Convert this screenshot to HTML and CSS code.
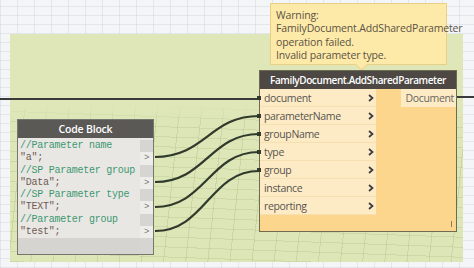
FILE: index.html
```html
<!DOCTYPE html>
<html lang="en">
<head>
    <meta charset="UTF-8">
    <title>Dynamo - AddSharedParameter warning</title>
    <link rel="stylesheet" href="styles.css">
</head>
<body>
    <div class="canvas">
        <div class="group"></div>

        <svg class="wires" width="474" height="268" viewBox="0 0 474 268">
            <path d="M0 99 H259" />
            <path d="M457 97 H474" />
            <path d="M155 157 C205 157 210 116 259 116" />
            <path d="M155 182 C205 182 210 134 259 134" />
            <path d="M155 207 C205 207 210 152 259 152" />
            <path d="M155 231 C205 231 210 171 259 171" />
        </svg>

        <div class="warning">
            <div>Warning:</div>
            <div>FamilyDocument.AddSharedParameter</div>
            <div>operation failed.</div>
            <div>Invalid parameter type.</div>
        </div>

        <div class="node code-block">
            <div class="node-title">Code Block</div>
            <div class="code-body">
                <div class="code-line"><span class="comment">//Parameter name</span><span class="port"></span></div>
                <div class="code-line"><span class="str">"a";</span><span class="port out">&gt;</span></div>
                <div class="code-line"><span class="comment">//SP Parameter group</span><span class="port"></span></div>
                <div class="code-line"><span class="str">"Data";</span><span class="port out">&gt;</span></div>
                <div class="code-line"><span class="comment">//SP Parameter type</span><span class="port"></span></div>
                <div class="code-line"><span class="str">"TEXT";</span><span class="port out">&gt;</span></div>
                <div class="code-line"><span class="comment">//Parameter group</span><span class="port"></span></div>
                <div class="code-line"><span class="str">"test";</span><span class="port out">&gt;</span></div>
            </div>
            <div class="code-foot"><span class="port"></span></div>
        </div>

        <div class="node func">
            <div class="node-title">FamilyDocument.AddSharedParameter</div>
            <div class="func-body">
                <div class="inputs">
                    <div class="in linked">document<svg class="chev" viewBox="0 0 6 8"><path d="M1 1 L4.5 4 L1 7" /></svg></div>
                    <div class="in linked">parameterName<svg class="chev" viewBox="0 0 6 8"><path d="M1 1 L4.5 4 L1 7" /></svg></div>
                    <div class="in linked">groupName<svg class="chev" viewBox="0 0 6 8"><path d="M1 1 L4.5 4 L1 7" /></svg></div>
                    <div class="in linked">type<svg class="chev" viewBox="0 0 6 8"><path d="M1 1 L4.5 4 L1 7" /></svg></div>
                    <div class="in linked">group<svg class="chev" viewBox="0 0 6 8"><path d="M1 1 L4.5 4 L1 7" /></svg></div>
                    <div class="in">instance<svg class="chev" viewBox="0 0 6 8"><path d="M1 1 L4.5 4 L1 7" /></svg></div>
                    <div class="in">reporting<svg class="chev" viewBox="0 0 6 8"><path d="M1 1 L4.5 4 L1 7" /></svg></div>
                </div>
                <div class="outputs">
                    <div class="out-port">Document</div>
                </div>
            </div>
            <div class="func-foot"><span class="tick"></span></div>
        </div>
    </div>
</body>
</html>
```

FILE: styles.css
```css
body {
    margin: 0;
    background-color: #f4f5f6;
    font-family: "Open Sans", "Liberation Sans", sans-serif;
}
.canvas {
    position: relative;
    width: 474px;
    height: 268px;
    overflow: hidden;
    background-color: #f4f5f6;
    background-image:
        repeating-linear-gradient(90deg, rgba(150, 165, 185, 0.18) 0 1px, transparent 1px 17px),
        repeating-linear-gradient(0deg, rgba(150, 165, 185, 0.18) 0 1px, transparent 1px 9px);
}
.group {
    position: absolute;
    left: 10px;
    top: 34px;
    width: 453px;
    height: 228px;
    background-color: #dde6b7;
    background-image:
        linear-gradient(180deg, #dfe7b9 0 70px, transparent 90px),
        repeating-linear-gradient(96deg, rgba(170, 185, 130, 0.35) 0 1px, transparent 1px 22px),
        repeating-linear-gradient(2deg, rgba(170, 185, 130, 0.3) 0 1px, transparent 1px 10px);
}
.wires {
    position: absolute;
    left: 0;
    top: 0;
}
.wires path {
    fill: none;
    stroke: #2f3a2c;
    stroke-width: 2.2;
}
.wires path:first-child,
.wires path:nth-child(2) {
    stroke: #3a3a3a;
    stroke-width: 2;
}

/* tooltip */
.warning {
    position: absolute;
    left: 270px;
    top: 3px;
    width: 167px;
    height: 53px;
    padding: 5px 3px 2px 5px;
    background-color: #fdeaa9;
    border: 1px solid #ead084;
    color: #5c5244;
    font-size: 10.5px;
    letter-spacing: -0.15px;
    line-height: 13.4px;
    white-space: nowrap;
}
.warning::after {
    content: "";
    position: absolute;
    left: 86px;
    bottom: -5px;
    width: 8px;
    height: 8px;
    background-color: #fdeaa9;
    border-right: 1px solid #ead084;
    border-bottom: 1px solid #ead084;
    transform: rotate(45deg);
}

/* nodes */
.node {
    position: absolute;
    box-sizing: border-box;
}
.node-title {
    height: 18px;
    line-height: 18px;
    text-align: center;
    color: #ffffff;
    font-weight: 600;
    font-size: 11px;
    white-space: nowrap;
}

.code-block {
    left: 17px;
    top: 119px;
    width: 137px;
    height: 136px;
    background-color: #e9e7e4;
    border: 1px solid #77756f;
}
.code-block .node-title {
    background-color: #5b5956;
    font-size: 10.5px;
    letter-spacing: -0.2px;
}
.code-body {
    padding-top: 2px;
}
.code-line {
    display: flex;
    height: 12.3px;
    line-height: 12.3px;
    font-family: "Liberation Mono", "DejaVu Sans Mono", monospace;
    font-size: 10px;
    letter-spacing: -0.25px;
}
.code-line span:first-child {
    flex: 1;
    padding-left: 2px;
    white-space: nowrap;
}
.comment {
    color: #3b9870;
}
.str {
    color: #6e5b52;
}
.port {
    width: 13px;
    background-color: #d7d5d2;
}
.port.out {
    background-color: #efedea;
    color: #777;
    font-size: 9px;
    text-align: center;
}
.code-foot {
    display: flex;
    justify-content: flex-end;
    height: 16px;
    background-color: #d6d4d0;
}

.func {
    left: 259px;
    top: 70px;
    width: 198px;
    height: 162px;
    background-color: #fdd68e;
    border: 1px solid #6f6a52;
}
.func .node-title {
    height: 18px;
    background-color: #4d4843;
    font-size: 10px;
    letter-spacing: -0.4px;
}
.func-body {
    display: flex;
    justify-content: space-between;
}
.inputs {
    width: 116px;
    background-color: #fdebc6;
}
.in {
    position: relative;
    display: flex;
    align-items: center;
    justify-content: space-between;
    height: 18px;
    box-sizing: border-box;
    padding: 0 2px 0 4px;
    border-bottom: 1px solid #f6dfb1;
    color: #58544f;
    font-size: 10.5px;
    letter-spacing: -0.35px;
}
.in.linked::before {
    content: "";
    position: absolute;
    left: -3px;
    top: 7px;
    width: 4px;
    height: 4px;
    background-color: #2f3a2c;
}
.chev {
    width: 6px;
    height: 8px;
}
.chev path {
    fill: none;
    stroke: #3b3b3b;
    stroke-width: 1.7;
}
.out-port {
    height: 18px;
    line-height: 18px;
    padding: 0 2px 0 5px;
    background-color: #fdebc6;
    color: #6a6560;
    font-size: 10.5px;
    letter-spacing: -0.35px;
}
.func-foot {
    display: flex;
    justify-content: flex-end;
    padding: 6px 4px 0 0;
}
.tick {
    width: 1px;
    height: 6px;
    background-color: #8a7d5c;
}
```
